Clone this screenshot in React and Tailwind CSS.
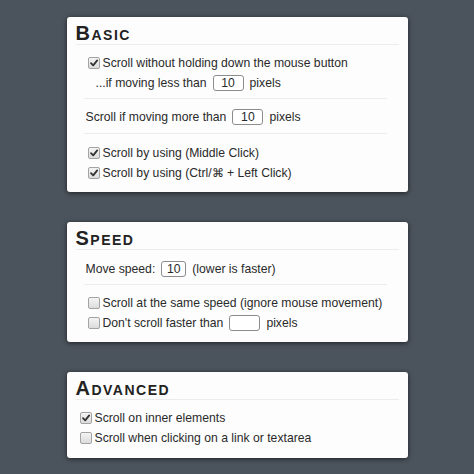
import React from "react";

function Box({ checked }) {
  return (
    <span className="ml-[4px] mr-[3px] inline-flex h-[12px] w-[12px] shrink-0 items-center justify-center rounded-[2px] border border-[#a3a3a3] bg-gradient-to-b from-[#f4f4f4] to-[#dcdcdc]">
      {checked && (
        <svg width="10" height="10" viewBox="0 0 10 10">
          <path d="M2 5.2 L4.2 7.4 L8.2 2.4" fill="none" stroke="#333" strokeWidth="1.8" strokeLinecap="round" strokeLinejoin="round" />
        </svg>
      )}
    </span>
  );
}

function Num({ value, w }) {
  return (
    <span className={`mx-[6px] inline-flex h-[16px] ${w} items-center justify-center rounded-[3px] border border-[#8c8c8c] bg-white leading-none`}>
      {value}
    </span>
  );
}

function Row({ children, className = "" }) {
  return <div className={`flex h-[20px] items-center whitespace-nowrap ${className}`}>{children}</div>;
}

function Card({ title, children, pb = "pb-[9px]" }) {
  return (
    <div className={`rounded-[3px] bg-[#fdfdfd] px-[9px] ${pb} shadow-[0_1px_5px_rgba(0,0,0,0.6)]`}>
      <div className="border-b border-[#ececec] pt-[5px] text-[20px] font-bold leading-[22px] tracking-[1.5px] text-[#222] [font-variant:small-caps]">
        {title}
      </div>
      {children}
    </div>
  );
}

export default function App() {
  return (
    <div className="min-h-[474px] bg-[#4b535c] pt-[17px] font-['Liberation_Sans',Arial,sans-serif] text-[12.2px] text-[#2a2a2a]">
      <div className="mx-auto flex w-[341px] flex-col gap-[30px]">
        <Card title="Basic">
          <div className="ml-[8px] mr-[12px]">
            <div className="border-b border-[#ececec] pt-[8px] pb-[5px]">
              <Row><Box checked />Scroll without holding down the mouse button</Row>
              <Row className="pl-[12px]">...if moving less than<Num value="10" w="w-[31px]" />pixels</Row>
            </div>
            <div className="border-b border-[#ececec] pt-[8px] pb-[6px]">
              <Row className="pl-[2px]">Scroll if moving more than<Num value="10" w="w-[31px]" />pixels</Row>
            </div>
            <div className="pt-[9px]">
              <Row><Box checked />Scroll by using (Middle Click)</Row>
              <Row><Box checked />Scroll by using (Ctrl/⌘ + Left Click)</Row>
            </div>
          </div>
        </Card>
        <Card title="Speed">
          <div className="ml-[8px] mr-[12px]">
            <div className="border-b border-[#ececec] pt-[9px] pb-[5px]">
              <Row className="pl-[2px]">Move speed:<Num value="10" w="w-[25px]" />(lower is faster)</Row>
            </div>
            <div className="pt-[8px]">
              <Row><Box />Scroll at the same speed (ignore mouse movement)</Row>
              <Row><Box />Don't scroll faster than<Num value="" w="w-[31px]" />pixels</Row>
            </div>
          </div>
        </Card>
        <Card title="Advanced" pb="pb-[10px]">
          <div className="pt-[8px]">
            <Row><Box checked />Scroll on inner elements</Row>
            <Row><Box />Scroll when clicking on a link or textarea</Row>
          </div>
        </Card>
      </div>
    </div>
  );
}
